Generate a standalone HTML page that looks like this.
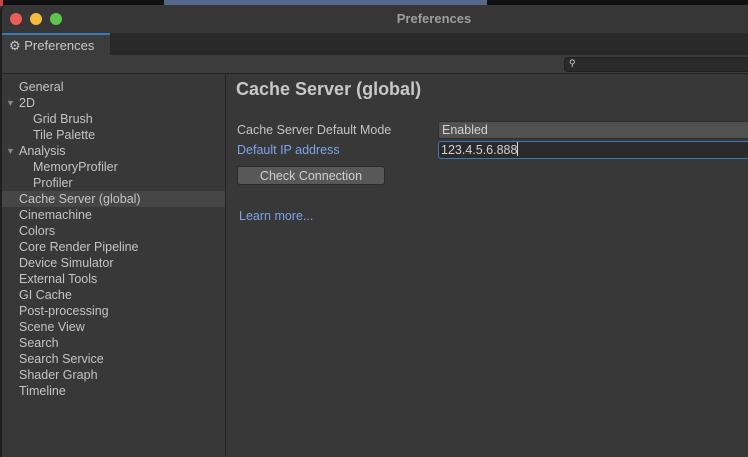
<!DOCTYPE html>
<html><head><style>
*{margin:0;padding:0;box-sizing:border-box}
body{width:748px;height:457px;overflow:hidden;background:#383838;font-family:"Liberation Sans",sans-serif;position:relative;color:#c4c4c4;font-size:12.5px}
.a{position:absolute}
.row{position:absolute;left:0;width:225px;height:16px;line-height:16px;white-space:nowrap}
</style></head><body>
<div class="a" style="left:0;top:0;width:748px;height:6px;background:#111"></div>
<div class="a" style="left:164px;top:0;width:323px;height:5px;background:#55688a"></div>
<div class="a" style="left:0;top:0;width:3px;height:6px;background:#c44"></div>
<div class="a" style="left:0;top:5px;width:748px;height:452px;background:#383838;border-top-left-radius:6px;border-left:2px solid #1e1e1e"></div>
<div class="a" style="left:2px;top:6px;width:746px;height:27px;background:#363636;border-top-left-radius:5px"></div>
<div class="a" style="left:10px;top:13px;width:12px;height:12px;border-radius:50%;background:#ec5f58"></div>
<div class="a" style="left:30px;top:13px;width:12px;height:12px;border-radius:50%;background:#f4bc40"></div>
<div class="a" style="left:50px;top:13px;width:12px;height:12px;border-radius:50%;background:#5fc44d"></div>
<div class="a" style="left:0;top:11px;width:868px;text-align:center;font-weight:bold;font-size:13px;color:#9e9e9e">Preferences</div>
<div class="a" style="left:2px;top:33px;width:746px;height:22px;background:#292929"></div>
<div class="a" style="left:2px;top:33px;width:108px;height:22px;background:#3c3c3c;border-top:2px solid #3a79bb"></div>
<div class="a" style="left:9px;top:38px;font-size:13px;color:#c8c8c8">⚙ Preferences</div>
<div class="a" style="left:2px;top:55px;width:746px;height:19px;background:#3c3c3c;border-bottom:1px solid #232323"></div>
<div class="a" style="left:564px;top:57px;width:190px;height:15px;background:#2a2a2a;border:1px solid #1f1f1f;border-radius:4px"></div>
<div class="a" style="left:569px;top:58px;font-size:9px;color:#ccc">⚲</div>
<div class="a" style="left:225px;top:74px;width:1px;height:383px;background:#232323"></div>
<div class="a" style="left:2px;top:191px;width:223px;height:16px;background:#464646"></div>
<div class="a" style="left:2px;top:79px;width:223px">
<div class="row" style="top:0;left:17px">General</div>
<div class="row" style="top:16px;left:17px"><span style="position:absolute;left:-13px;font-size:9px;color:#888">▼</span>2D</div>
<div class="row" style="top:32px;left:31px">Grid Brush</div>
<div class="row" style="top:48px;left:31px">Tile Palette</div>
<div class="row" style="top:64px;left:17px"><span style="position:absolute;left:-13px;font-size:9px;color:#888">▼</span>Analysis</div>
<div class="row" style="top:80px;left:31px">MemoryProfiler</div>
<div class="row" style="top:96px;left:31px">Profiler</div>
<div class="row" style="top:112px;left:17px">Cache Server (global)</div>
<div class="row" style="top:128px;left:17px">Cinemachine</div>
<div class="row" style="top:144px;left:17px">Colors</div>
<div class="row" style="top:160px;left:17px">Core Render Pipeline</div>
<div class="row" style="top:176px;left:17px">Device Simulator</div>
<div class="row" style="top:192px;left:17px">External Tools</div>
<div class="row" style="top:208px;left:17px">GI Cache</div>
<div class="row" style="top:224px;left:17px">Post-processing</div>
<div class="row" style="top:240px;left:17px">Scene View</div>
<div class="row" style="top:256px;left:17px">Search</div>
<div class="row" style="top:272px;left:17px">Search Service</div>
<div class="row" style="top:288px;left:17px">Shader Graph</div>
<div class="row" style="top:304px;left:17px">Timeline</div>
</div>
<div class="a" style="left:236px;top:79px;font-size:18px;font-weight:bold;color:#c8c8c8">Cache Server (global)</div>
<div class="a" style="left:237px;top:123px">Cache Server Default Mode</div>
<div class="a" style="left:237px;top:143px;color:#7ba4e8">Default IP address</div>
<div class="a" style="left:438px;top:121px;width:312px;height:18px;background:#515151;border:1px solid #2e2e2e;border-radius:3px;padding-left:3px;line-height:16px;color:#d2d2d2">Enabled</div>
<div class="a" style="left:438px;top:141px;width:312px;height:18px;background:#2a2a2a;border:1px solid #3a79bb;border-radius:3px;padding-left:2px;line-height:16px;color:#d2d2d2">123.4.5.6.888<span style="display:inline-block;width:1px;height:14px;background:#ddd;vertical-align:-2px"></span></div>
<div class="a" style="left:237px;top:166px;width:148px;height:19px;background:#585858;border:1px solid #2a2a2a;border-radius:3px;text-align:center;line-height:18px;color:#d0d0d0">Check Connection</div>
<div class="a" style="left:239px;top:209px;color:#7ba4e8">Learn more...</div>
</body></html>
